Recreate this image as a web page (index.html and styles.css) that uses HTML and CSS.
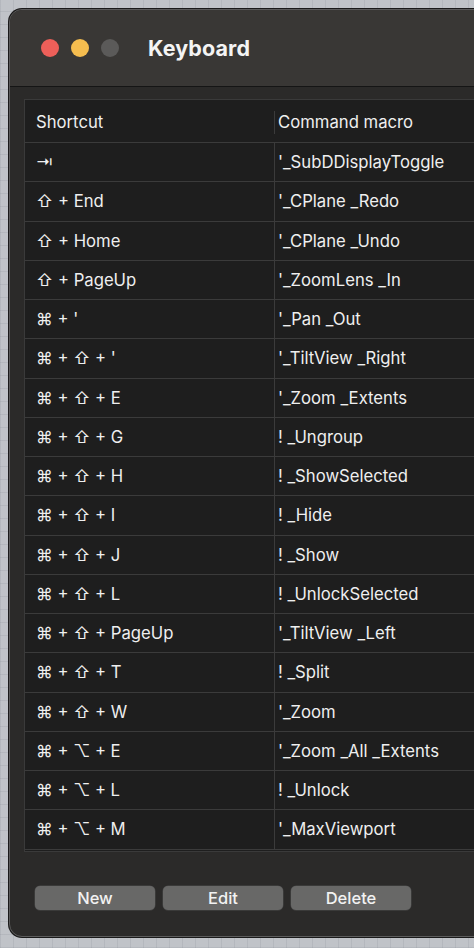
FILE: index.html
```html
<!DOCTYPE html>
<html>
<head>
<meta charset="utf-8">
<link rel="stylesheet" href="styles.css">
</head>
<body>
<div class="window">
  <div class="titlebar">
    <div class="lights">
      <span class="light red"></span>
      <span class="light yellow"></span>
      <span class="light gray"></span>
    </div>
    <div class="title">Keyboard</div>
  </div>
  <div class="content">
    <div class="table">
      <div class="row head">
        <div class="c1">Shortcut</div>
        <div class="c2"><span class="sep"></span>Command macro</div>
      </div>
      <div class="row"><div class="c1">⇥</div><div class="c2">'_SubDDisplayToggle</div></div>
      <div class="row"><div class="c1">⇧ + End</div><div class="c2">'_CPlane _Redo</div></div>
      <div class="row"><div class="c1">⇧ + Home</div><div class="c2">'_CPlane _Undo</div></div>
      <div class="row"><div class="c1">⇧ + PageUp</div><div class="c2">'_ZoomLens _In</div></div>
      <div class="row"><div class="c1">⌘ + '</div><div class="c2">'_Pan _Out</div></div>
      <div class="row"><div class="c1">⌘ + ⇧ + '</div><div class="c2">'_TiltView _Right</div></div>
      <div class="row"><div class="c1">⌘ + ⇧ + E</div><div class="c2">'_Zoom _Extents</div></div>
      <div class="row"><div class="c1">⌘ + ⇧ + G</div><div class="c2">! _Ungroup</div></div>
      <div class="row"><div class="c1">⌘ + ⇧ + H</div><div class="c2">! _ShowSelected</div></div>
      <div class="row"><div class="c1">⌘ + ⇧ + I</div><div class="c2">! _Hide</div></div>
      <div class="row"><div class="c1">⌘ + ⇧ + J</div><div class="c2">! _Show</div></div>
      <div class="row"><div class="c1">⌘ + ⇧ + L</div><div class="c2">! _UnlockSelected</div></div>
      <div class="row"><div class="c1">⌘ + ⇧ + PageUp</div><div class="c2">'_TiltView _Left</div></div>
      <div class="row"><div class="c1">⌘ + ⇧ + T</div><div class="c2">! _Split</div></div>
      <div class="row"><div class="c1">⌘ + ⇧ + W</div><div class="c2">'_Zoom</div></div>
      <div class="row"><div class="c1">⌘ + ⌥ + E</div><div class="c2">'_Zoom _All _Extents</div></div>
      <div class="row"><div class="c1">⌘ + ⌥ + L</div><div class="c2">! _Unlock</div></div>
      <div class="row"><div class="c1">⌘ + ⌥ + M</div><div class="c2">'_MaxViewport</div></div>
    </div>
    <div class="buttons">
      <button class="btn">New</button>
      <button class="btn">Edit</button>
      <button class="btn">Delete</button>
    </div>
  </div>
</div>
</body>
</html>
```
FILE: styles.css
```css
html, body {
  margin: 0;
  padding: 0;
  width: 474px;
  height: 948px;
  overflow: hidden;
}
body {
  background-color: #c0c3c8;
  background-image:
    repeating-linear-gradient(90deg, rgba(120,125,135,0.16) 0 1px, transparent 1px 13px),
    repeating-linear-gradient(0deg, rgba(120,125,135,0.16) 0 1px, transparent 1px 13px);
  font-family: Inter, "Open Sans", "DejaVu Sans", sans-serif;
  padding-top: 9px;
  padding-left: 9px;
  box-sizing: border-box;
}
.window {
  width: 520px;
  height: 928px;
  box-sizing: border-box;
  border: 1px solid #5c5c5c;
  border-radius: 13px;
  background: #2b2a29;
  overflow: hidden;
  display: flex;
  flex-direction: column;
  box-shadow: 0 0 0 1px #1a1a1a;
}
.titlebar {
  height: 77px;
  flex: none;
  background: #393735;
  border-bottom: 1px solid #151515;
  display: flex;
  align-items: center;
  box-sizing: border-box;
  padding-left: 31px;
}
.lights {
  display: flex;
  gap: 12px;
}
.light {
  width: 18px;
  height: 18px;
  border-radius: 50%;
  display: block;
}
.red { background: #ed5f59; }
.yellow { background: #f5bd4f; }
.gray { background: #5b5a59; }
.title {
  margin-left: 29px;
  color: #f4f4f4;
  font-size: 21.5px;
  font-weight: 700;
  letter-spacing: 0.1px;
  margin-top: 0;
}
.content {
  flex: 1;
  padding: 12px 0 0 14px;
  display: flex;
  flex-direction: column;
}
.table {
  height: 753px;
  box-sizing: border-box;
  background: #1e1e1e;
  border: 1px solid #3a3a3a;
  border-right: none;
  overflow: hidden;
}
.row {
  display: flex;
  height: 39.25px;
  box-sizing: border-box;
  border-bottom: 1px solid #3b3b3b;
  color: #efefef;
  font-size: 16.7px;
  align-items: center;
}
.row.head {
  height: 43px;
  padding-top: 2px;
}
.c1 {
  width: 250px;
  flex: none;
  box-sizing: border-box;
  padding-left: 11px;
  height: 100%;
  display: flex;
  align-items: center;
  border-right: 1px solid #3b3b3b;
}
.c2 {
  flex: 1;
  padding-left: 3px;
  height: 100%;
  display: flex;
  align-items: center;
  position: relative;
}
.head .c1 {
  border-right: none;
}
.head .c2 {
  padding-left: 3px;
}
.sep {
  position: absolute;
  left: -1px;
  top: 9px;
  bottom: 8px;
  width: 1px;
  background: #3b3b3b;
}
.buttons {
  display: flex;
  gap: 8px;
  margin-top: 34px;
  padding-left: 11px;
}
.btn {
  width: 120px;
  height: 24px;
  border: none;
  border-radius: 5px;
  background: #686867;
  color: #f2f2f2;
  font-family: Inter, "Open Sans", "DejaVu Sans", sans-serif;
  font-size: 16.5px;
  font-weight: 500;
  padding: 0;
  box-shadow: 0 0 0 0.5px #4a4a4a;
}
```
